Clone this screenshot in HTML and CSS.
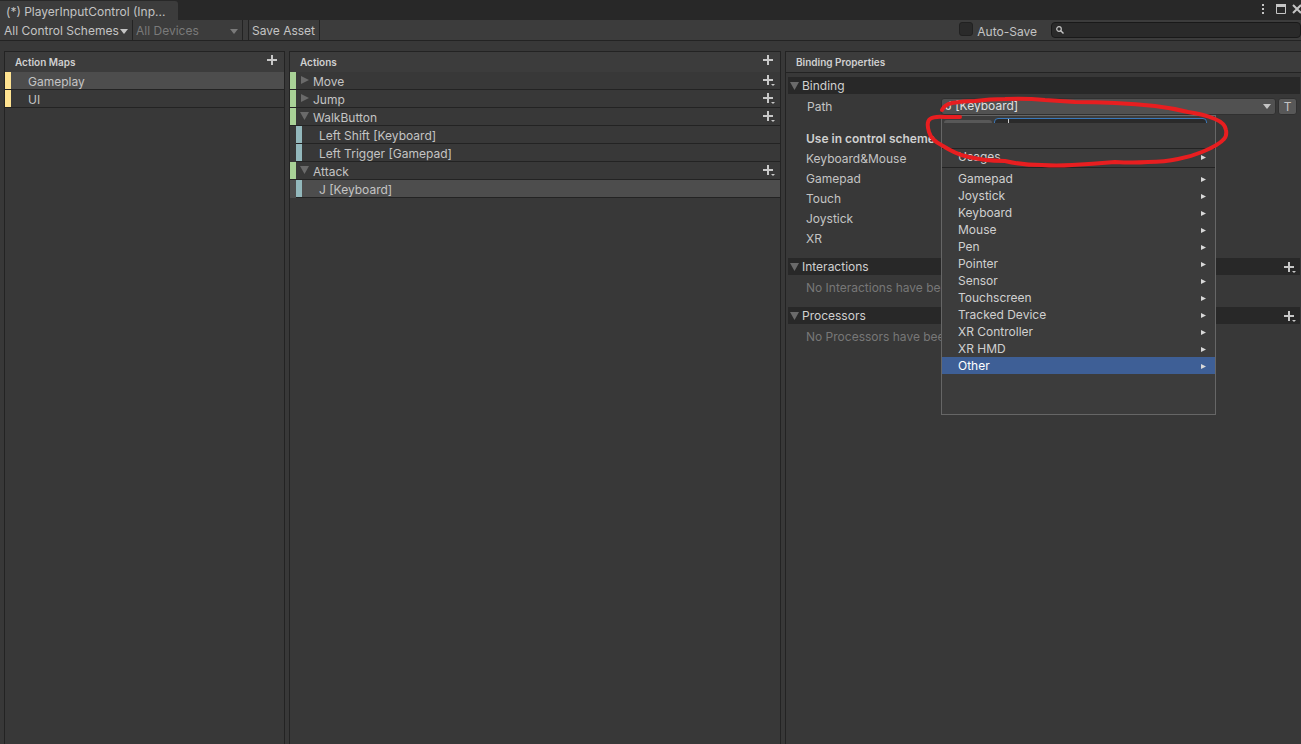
FILE: index.html
```html
<!DOCTYPE html>
<html lang="en">
<head>
<meta charset="utf-8">
<title>PlayerInputControl</title>
<link rel="stylesheet" href="styles.css">
</head>
<body>
<svg class="defs" aria-hidden="true">
  <symbol id="plus" viewBox="0 0 14 14"><path d="M1 5h10v2H1zM5 1h2v10H5z" fill="#c8c8c8"/></symbol>
  <symbol id="plus-menu" viewBox="0 0 14 14"><path d="M1 6h10v2H1zM5 2h2v10H5zM9 11h4l-2 2z" fill="#c8c8c8"/></symbol>
  <symbol id="down" viewBox="0 0 8 5"><path d="M0 0h8L4 5z" fill="currentColor"/></symbol>
  <symbol id="fold-open" viewBox="0 0 10 8"><path d="M0 0h9L4.500 8z" fill="#6a6a6a"/></symbol>
  <symbol id="fold-shut" viewBox="0 0 10 8"><path d="M1 0l8 4-8 4z" fill="#6a6a6a"/></symbol>
  <symbol id="sub" viewBox="0 0 5 5"><path d="M0 0l5 2.500-5 2.500z" fill="#d8d8d8"/></symbol>
</svg>
<div class="window">
  <header class="tabbar">
    <div class="tab">(*) PlayerInputControl (Inp...</div>
    <div class="window-buttons">
      <button class="more" aria-label="Menu"><svg width="4" height="12" viewBox="0 0 4 12"><path d="M1 1h2v2H1zM1 5h2v2H1zM1 9h2v2H1z" fill="#c4c4c4"/></svg></button>
      <button aria-label="Maximize"><svg width="10" height="10" viewBox="0 0 10 10"><path d="M.5.5h9v9h-9z" fill="none" stroke="#c4c4c4"/><path d="M0 0h10v3H0z" fill="#c4c4c4"/></svg></button>
      <button aria-label="Close"><svg width="10" height="10" viewBox="0 0 10 10"><path d="M1 1l8 8M9 1L1 9" stroke="#c4c4c4" stroke-width="2"/></svg></button>
    </div>
  </header>
  <div class="toolbar">
    <button class="tool schemes">All Control Schemes<svg width="8" height="5"><use href="#down"/></svg></button>
    <button class="tool devices" disabled>All Devices<svg width="8" height="5"><use href="#down"/></svg></button>
    <button class="tool save">Save Asset</button>
    <label class="autosave"><input type="checkbox"><span>Auto-Save</span></label>
    <div class="search">
      <svg width="8" height="8" viewBox="0 0 8 8"><circle cx="3" cy="3" r="2.300" fill="none" stroke="#c4c4c4" stroke-width="1.200"/><path d="M4.500 4.500l3 3" stroke="#c4c4c4" stroke-width="1.400"/></svg>
      <input type="search" aria-label="Search">
    </div>
  </div>
  <main class="panes">
    <section class="pane">
      <div class="pane-head"><h2>Action Maps</h2><button aria-label="Add action map"><svg width="14" height="14"><use href="#plus"/></svg></button></div>
      <ul class="tree">
        <li class="row map selected">Gameplay</li>
        <li class="row map">UI</li>
      </ul>
    </section>
    <section class="pane">
      <div class="pane-head"><h2>Actions</h2><button aria-label="Add action"><svg width="14" height="14"><use href="#plus"/></svg></button></div>
      <ul class="tree">
        <li class="row action"><svg width="10" height="8"><use href="#fold-shut"/></svg><span>Move</span><button aria-label="Add binding"><svg width="14" height="14"><use href="#plus-menu"/></svg></button></li>
        <li class="row action"><svg width="10" height="8"><use href="#fold-shut"/></svg><span>Jump</span><button aria-label="Add binding"><svg width="14" height="14"><use href="#plus-menu"/></svg></button></li>
        <li class="row action"><svg width="10" height="8"><use href="#fold-open"/></svg><span>WalkButton</span><button aria-label="Add binding"><svg width="14" height="14"><use href="#plus-menu"/></svg></button></li>
        <li class="row binding">Left Shift [Keyboard]</li>
        <li class="row binding">Left Trigger [Gamepad]</li>
        <li class="row action"><svg width="10" height="8"><use href="#fold-open"/></svg><span>Attack</span><button aria-label="Add binding"><svg width="14" height="14"><use href="#plus-menu"/></svg></button></li>
        <li class="row binding selected">J [Keyboard]</li>
      </ul>
    </section>
    <section class="pane properties">
      <div class="pane-head"><h2>Binding Properties</h2></div>
      <h3 class="fold"><svg width="10" height="8"><use href="#fold-open"/></svg><span>Binding</span></h3>
      <div class="path-row">
        <label for="path">Path</label>
        <div class="path-field">
          <select id="path"><option>J [Keyboard]</option></select>
          <svg class="select-arrow" width="8" height="5"><use href="#down"/></svg>
          <div class="popup">
            <div class="popup-top"><button class="listen" aria-label="Listen"></button><div class="popup-search"><input type="text" aria-label="Search controls"><i class="caret"></i></div></div>
            <div class="usages"><button class="item">Usages<svg width="5" height="5"><use href="#sub"/></svg></button></div>
            <div class="items">
              <button class="item">Gamepad<svg width="5" height="5"><use href="#sub"/></svg></button>
              <button class="item">Joystick<svg width="5" height="5"><use href="#sub"/></svg></button>
              <button class="item">Keyboard<svg width="5" height="5"><use href="#sub"/></svg></button>
              <button class="item">Mouse<svg width="5" height="5"><use href="#sub"/></svg></button>
              <button class="item">Pen<svg width="5" height="5"><use href="#sub"/></svg></button>
              <button class="item">Pointer<svg width="5" height="5"><use href="#sub"/></svg></button>
              <button class="item">Sensor<svg width="5" height="5"><use href="#sub"/></svg></button>
              <button class="item">Touchscreen<svg width="5" height="5"><use href="#sub"/></svg></button>
              <button class="item">Tracked Device<svg width="5" height="5"><use href="#sub"/></svg></button>
              <button class="item">XR Controller<svg width="5" height="5"><use href="#sub"/></svg></button>
              <button class="item">XR HMD<svg width="5" height="5"><use href="#sub"/></svg></button>
              <button class="item active">Other<svg width="5" height="5"><use href="#sub"/></svg></button>
            </div>
          </div>
        </div>
        <button class="text-mode">T</button>
      </div>
      <div class="schemes-list">
        <h4>Use in control scheme</h4>
        <p>Keyboard&amp;Mouse</p>
        <p>Gamepad</p>
        <p>Touch</p>
        <p>Joystick</p>
        <p>XR</p>
      </div>
      <h3 class="fold"><svg width="10" height="8"><use href="#fold-open"/></svg><span>Interactions</span><button aria-label="Add interaction"><svg width="14" height="14"><use href="#plus-menu"/></svg></button></h3>
      <p class="empty">No Interactions have bee</p>
      <h3 class="fold"><svg width="10" height="8"><use href="#fold-open"/></svg><span>Processors</span><button aria-label="Add processor"><svg width="14" height="14"><use href="#plus-menu"/></svg></button></h3>
      <p class="empty">No Processors have bee</p>
      <svg class="scribble" width="310" height="80" viewBox="920 92 310 80" aria-hidden="true"><path d="M942 109Q944 104 952 102Q963 100 975 100Q990 98 1005 98Q1025 97 1045 99Q1060 100 1075 101Q1095 101 1115 102Q1136 103 1155 105Q1172 107 1188 111Q1203 113 1215 118Q1225 122 1226 129Q1227 135 1224 138Q1219 144 1202 151Q1190 156 1178 158Q1165 161 1148 161Q1133 162 1115 161Q1092 163 1072 164Q1056 165 1042 164Q1022 164 1005 160Q983 160 965 155Q956 153 943 145Q931 139 929 131Q926 121 930 118Q934 115 945 116L960 116"/></svg>
    </section>
  </main>
</div>
</body>
</html>
```

FILE: styles.css
```css
* { box-sizing: border-box; }
body {
  margin: 0;
  background: #383838;
  color: #c4c4c4;
  font: 12px/16px Inter, "Liberation Sans", sans-serif;
}
button, input, select { font: inherit; color: inherit; }
button { padding: 0; border: 0; background: none; }
h2, h3, h4, p, ul { margin: 0; padding: 0; font-size: inherit; font-weight: 400; }
svg { display: block; flex: none; }
.defs { position: absolute; width: 0; height: 0; }
.window { display: flex; flex-direction: column; min-height: 100vh; overflow: hidden; }

.tabbar { display: flex; justify-content: space-between; height: 20px; background: #282828; }
.tab {
  height: 19px;
  margin-top: 1px;
  padding: 3px 13px 0 6px;
  background: #3c3c3c;
  border-radius: 0 3px 0 0;
  white-space: nowrap;
}
.window-buttons { display: flex; align-items: center; gap: 6px; height: 18px; margin-right: -1px; }
.more { margin-right: 5px; }

.toolbar { display: flex; height: 21px; background: #3c3c3c; border-bottom: 1px solid #232323; }
.tool { display: flex; align-items: center; justify-content: space-between; padding: 2px 4px 0; border-right: 1px solid #232323; white-space: nowrap; }
.schemes { width: 133px; }
.devices { width: 110px; padding-left: 3px; color: #7a7a7a; }
.save { margin-left: 5px; padding-left: 3px; border-left: 1px solid #232323; }
.autosave { display: flex; align-items: center; gap: 4px; margin-left: auto; }
.autosave span { padding-top: 3px; }
.autosave input { appearance: none; width: 14px; height: 14px; margin: 0 0 2px; background: #2a2a2a; border: 1px solid #212121; border-radius: 3px; }
.search { display: flex; align-items: center; width: 250px; height: 16px; margin: 2px 0 0 14px; padding: 0 4px; background: #2a2a2a; border: 1px solid #191919; border-radius: 4px; }
.search input { flex: 1; min-width: 0; height: 12px; padding: 0; border: 0; background: none; outline: 0; }

.panes { flex: 1; display: grid; grid-template-columns: 281fr 492fr 516fr; gap: 4px; padding: 10px 0 0 4px; }
.pane { min-width: 0; border: 1px solid #232323; border-bottom: 0; }
.pane-head { display: flex; align-items: center; justify-content: space-between; height: 20px; padding: 0 4px 0 10px; background: #3c3c3c; }
.pane-head h2 { font-size: 10px; font-weight: 600; color: #d0d0d0; }
.pane-head button { padding-bottom: 2px; }
.tree { list-style: none; }
.row { display: flex; align-items: center; height: 18px; padding: 2px 4px 0 23px; border-bottom: 1px solid #232323; background: linear-gradient(90deg, var(--mark) 6px, transparent 6px); }
.map { --mark: #ffe391; }
.action { --mark: #a8d196; padding: 0 4px 0 10px; gap: 3px; }
.action svg:first-child { margin-bottom: 1px; }
.action span { flex: 1; padding-top: 2px; }
.binding { margin-left: 6px; --mark: #93b8bc; }
.selected { background-color: #4d4d4d; }
.binding.selected { box-shadow: -6px 0 #4d4d4d; }

.properties { position: relative; border-right: 0; }
.properties .pane-head { height: 21px; border-bottom: 1px solid #232323; }
.fold { display: flex; align-items: center; gap: 2px; height: 17px; margin: 4px 1px 0 2px; padding: 0 3px 0 2px; background: #282828; color: #d0d0d0; }
.fold span { flex: 1; padding-top: 1px; }
.path-row { display: flex; gap: 2px; height: 17px; margin: 4px 4px 0 0; }
.path-row label { width: 155px; padding: 1px 0 0 21px; }
.path-field { position: relative; flex: 1; min-width: 0; margin-left: -2px; }
.path-field select { display: block; width: 100%; height: 17px; padding: 0 3px 2px; appearance: none; border: 1px solid #303030; border-radius: 3px; background: #515151; color: #e0e0e0; line-height: 14px; }
.select-arrow { position: absolute; right: 5px; top: 6px; }
.text-mode { width: 19px; height: 17px; border: 1px solid #303030; border-radius: 3px; background: #585858; line-height: 14px; }

.popup { position: absolute; left: 0; top: 17px; z-index: 1; width: 275px; padding-bottom: 40px; border: 1px solid #666; background: #3c3c3c; }
.popup-top { display: flex; align-items: flex-start; gap: 2px; height: 7px; margin-bottom: 25px; padding: 2px 8px 0 2px; overflow: hidden; }
.listen { width: 48px; height: 18px; margin-top: 2px; border-radius: 3px; background: #585858; }
.popup-search { position: relative; flex: 1; }
.popup-search input { display: block; width: 100%; height: 18px; border: 1px solid #3a79bb; border-radius: 4px; background: #2a2a2a; outline: 0; }
.caret { position: absolute; left: 14px; top: 1px; width: 1px; height: 14px; background: #d0d0d0; }
.usages { padding-bottom: 1px; border: 1px solid #232323; border-width: 1px 0; }
.usages .item { padding: 0 9px 1px 16px; }
.items { padding-top: 2px; }
.item { display: flex; align-items: center; justify-content: space-between; width: 100%; height: 17px; padding: 1px 9px 0 16px; color: #d0d0d0; }
.active { background: #3e5f96; color: #fff; }

.schemes-list { padding: 14px 0 5px 20px; line-height: 20px; }
.schemes-list h4 { font-weight: 600; color: #d0d0d0; }
.properties .empty { padding: 5px 0 7px 20px; color: #777; }
.scribble { position: absolute; left: 134px; top: 41px; z-index: 2; fill: none; stroke: #e81e20; stroke-width: 4; stroke-linecap: round; stroke-linejoin: round; pointer-events: none; }
```
